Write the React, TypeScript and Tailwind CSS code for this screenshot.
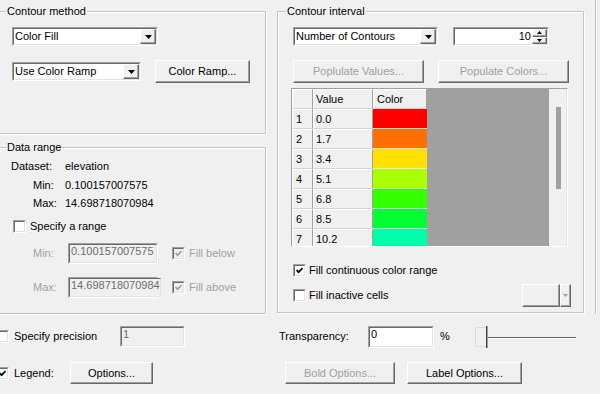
import React from "react";

const sunken = "border border-t-[#a0a0a0] border-l-[#a0a0a0] border-r-white border-b-white";
const sunkenInner = "border border-t-[#696969] border-l-[#696969] border-r-[#e3e3e3] border-b-[#e3e3e3]";
const raised =
  "border border-t-white border-l-white border-r-[#696969] border-b-[#696969] shadow-[inset_-1px_-1px_0_#a0a0a0]";

const Arrow = ({ color = "#000" }: { color?: string }) => (
  <svg width="7" height="4" viewBox="0 0 7 4">
    <polygon points="0,0 7,0 3.5,4" fill={color} />
  </svg>
);

const Combo = ({ text, className }: { text: string; className: string }) => (
  <div className={`flex ${sunken} ${className}`}>
    <div className={`flex min-w-0 flex-1 bg-white ${sunkenInner}`}>
      <span className="flex-1 overflow-hidden whitespace-nowrap pl-[1px] leading-[15px]">{text}</span>
      <div className={`flex w-[16px] items-center justify-center bg-[#f0f0f0] ${raised}`}>
        <Arrow />
      </div>
    </div>
  </div>
);

const Btn = ({ text, disabled, className }: { text: string; disabled?: boolean; className: string }) => (
  <button
    type="button"
    className={`flex items-center justify-center bg-[#f0f0f0] leading-[13px] ${raised} ${className} ${
      disabled ? "text-[#a0a0a0]" : "text-black"
    }`}
  >
    {text}
  </button>
);

const Edit = ({ text, disabled, className }: { text: string; disabled?: boolean; className: string }) => (
  <div className={`flex ${sunken} ${className}`}>
    <div
      className={`flex-1 pl-[1px] leading-[13px] ${sunkenInner} ${
        disabled ? "bg-[#f0f0f0] text-[#6d6d6d]" : "bg-white text-black"
      }`}
    >
      {text}
    </div>
  </div>
);

const Check = ({ checked, disabled, className = "" }: { checked?: boolean; disabled?: boolean; className?: string }) => (
  <div className={`flex h-[13px] w-[13px] shrink-0 ${sunken} ${className}`}>
    <div
      className={`flex flex-1 items-center justify-center ${sunkenInner} ${disabled ? "bg-[#f0f0f0]" : "bg-white"}`}
    >
      {checked && (
        <svg width="7" height="7" viewBox="0 0 7 7">
          <path d="M0.5 3 L2.6 5.2 L6.6 1" fill="none" stroke={disabled ? "#a0a0a0" : "#000"} strokeWidth="1.7" />
        </svg>
      )}
    </div>
  </div>
);

const rows = [
  { n: "1", v: "0.0", c: "#ff0000" },
  { n: "2", v: "1.7", c: "#ff7000" },
  { n: "3", v: "3.4", c: "#ffe000" },
  { n: "4", v: "5.1", c: "#aaff00" },
  { n: "5", v: "6.8", c: "#33ff00" },
  { n: "6", v: "8.5", c: "#00ff33" },
  { n: "7", v: "10.2", c: "#00ffaa" },
];

const cell = "border-r border-b border-r-[#a0a0a0] border-b-[#d4d4d4] border-t border-l border-t-white border-l-white";

const ContourTable = () => (
  <div className={`ml-[13px] mt-[5px] flex h-[159px] w-[277px] overflow-hidden ${sunken}`}>
    <div className="flex w-[135px] flex-col">
      <div className="flex h-[20px] shrink-0 leading-[18px]">
        <div className={`w-[21px] ${cell}`} />
        <div className={`w-[60px] pl-[2px] ${cell} border-r-[#696969]`}>Value</div>
        <div className={`w-[54px] pl-[3px] ${cell}`}>Color</div>
      </div>
      {rows.map((r) => (
        <div key={r.n} className="flex h-[20px] shrink-0 leading-[18px]">
          <div className={`w-[21px] pl-[3px] ${cell} border-r-[#696969]`}>{r.n}</div>
          <div className={`w-[60px] pl-[2px] ${cell}`}>{r.v}</div>
          <div className="w-[54px] border-b border-b-[#e6e6e6]" style={{ backgroundColor: r.c }} />
        </div>
      ))}
    </div>
    <div className="w-[122px] bg-[#a0a0a0]" />
    <div className="w-[18px] border-r border-r-[#e3e3e3] pl-[7px] pt-[18px]">
      <div className="h-[82px] w-[5px] bg-[#a0a0a0]" />
    </div>
  </div>
);

const Spin = () => (
  <div className={`ml-[15px] flex h-[19px] w-[96px] ${sunken}`}>
    <div className={`flex flex-1 bg-white ${sunkenInner}`}>
      <span className="flex-1 pr-[1px] text-right leading-[15px]">10</span>
      <div className="flex w-[15px] flex-col">
        <div className={`flex flex-1 items-center justify-center bg-[#f0f0f0] ${raised}`}>
          <svg width="5" height="3" viewBox="0 0 5 3">
            <polygon points="0,3 5,3 2.5,0" fill="#000" />
          </svg>
        </div>
        <div className={`flex flex-1 items-center justify-center bg-[#f0f0f0] ${raised}`}>
          <svg width="5" height="3" viewBox="0 0 5 3">
            <polygon points="0,0 5,0 2.5,3" fill="#000" />
          </svg>
        </div>
      </div>
    </div>
  </div>
);

const Slider = () => (
  <svg width="101" height="23" viewBox="0 0 101 23" className="shrink-0">
    <rect x="0.5" y="2.5" width="11" height="19" fill="none" stroke="#dcdcdc" />
    <line x1="12" y1="12.5" x2="101" y2="12.5" stroke="#646464" />
    <line x1="12" y1="13.5" x2="101" y2="13.5" stroke="#ffffff" />
    <line x1="11.5" y1="1" x2="11.5" y2="23" stroke="#404040" />
    <line x1="12.5" y1="1" x2="12.5" y2="23" stroke="#a0a0a0" />
  </svg>
);

const group = "border border-[#c4c4c4] shadow-[inset_1px_1px_0_#fff,1px_1px_0_#fff]";

export default function App() {
  return (
    <div className="relative h-[394px] w-[600px] overflow-hidden bg-[#f0f0f0] font-['Liberation_Sans',Arial,sans-serif] text-[11px] text-black">
      <div className="flex pt-[5px]">
        <div className="ml-[-2px] flex w-[268px] flex-col">
          <fieldset className={`h-[129px] ${group}`}>
            <legend className="ml-[7px] px-[1px] leading-[13px]">Contour method</legend>
            <div className="flex flex-col">
              <Combo text="Color Fill" className="ml-[13px] mt-[9px] h-[19px] w-[146px]" />
              <div className="mt-[14px] flex h-[23px] items-center">
                <Combo text="Use Color Ramp" className="ml-[13px] h-[19px] w-[129px]" />
                <Btn text="Color Ramp..." className="ml-[14px] h-[23px] w-[95px]" />
              </div>
            </div>
          </fieldset>
          <fieldset className={`mt-[7px] h-[173px] ${group}`}>
            <legend className="ml-[7px] px-[1px] leading-[13px]">Data range</legend>
            <div className="flex flex-col leading-[13px]">
              <div className="ml-[12px] mt-[6px] flex">
                <span className="w-[54px]">Dataset:</span>
                <span>elevation</span>
              </div>
              <div className="ml-[12px] mt-[6px] flex">
                <span className="w-[54px] pl-[22px]">Min:</span>
                <span>0.100157007575</span>
              </div>
              <div className="ml-[12px] mt-[5px] flex">
                <span className="w-[54px] pl-[22px]">Max:</span>
                <span>14.698718070984</span>
              </div>
              <div className="ml-[14px] mt-[10px] flex items-center">
                <Check />
                <span className="ml-[4px]">Specify a range</span>
              </div>
              <div className="mt-[10px] flex h-[21px] items-center">
                <span className="ml-[34px] w-[35px] text-[#a0a0a0]">Min:</span>
                <Edit text="0.100157007575" disabled className="h-[21px] w-[90px]" />
                <Check checked disabled className="ml-[14px]" />
                <span className="ml-[4px] text-[#a0a0a0]">Fill below</span>
              </div>
              <div className="mt-[13px] flex h-[21px] items-center">
                <span className="ml-[34px] w-[35px] text-[#a0a0a0]">Max:</span>
                <Edit text="14.698718070984" disabled className="h-[21px] w-[90px]" />
                <Check checked disabled className="ml-[14px]" />
                <span className="ml-[4px] text-[#a0a0a0]">Fill above</span>
              </div>
            </div>
          </fieldset>
        </div>

        <fieldset className={`ml-[11px] h-[308px] w-[307px] ${group}`}>
          <legend className="ml-[8px] px-[1px] leading-[13px]">Contour interval</legend>
          <div className="flex flex-col">
            <div className="mt-[9px] flex">
              <Combo text="Number of Contours" className="ml-[15px] h-[19px] w-[145px]" />
              <Spin />
            </div>
            <div className="mt-[14px] flex">
              <Btn text="Poplulate Values..." disabled className="ml-[15px] h-[23px] w-[131px]" />
              <Btn text="Populate Colors..." disabled className="ml-[14px] h-[23px] w-[131px]" />
            </div>
            <ContourTable />
            <div className="ml-[15px] mt-[17px] flex items-center leading-[13px]">
              <Check checked />
              <span className="ml-[3px]">Fill continuous color range</span>
            </div>
            <div className="mt-[7px] flex h-[23px] items-center leading-[13px]">
              <Check className="ml-[15px]" />
              <span className="ml-[3px]">Fill inactive cells</span>
              <div className="ml-auto mr-[12px] flex h-[23px]">
                <div className={`w-[38px] bg-[#f0f0f0] ${raised}`} />
                <div className={`flex w-[11px] items-center justify-center bg-[#f0f0f0] ${raised}`}>
                  <svg width="5" height="3" viewBox="0 0 5 3">
                    <polygon points="0,0 5,0 2.5,3" fill="#a0a0a0" />
                  </svg>
                </div>
              </div>
            </div>
          </div>
        </fieldset>
        <div className="ml-[11px] mt-[-5px] flex h-[314px]">
          <div className="w-px bg-[#c4c4c4]" />
          <div className="w-px bg-white" />
        </div>
      </div>

      <div className="mt-[11px] flex h-[23px] items-center leading-[13px]">
        <div className="flex w-[277px] items-center">
          <Check className="ml-[-4px]" />
          <span className="ml-[5px] w-[106px]">Specify precision</span>
          <Edit text="1" disabled className="h-[21px] w-[65px]" />
        </div>
        <span className="ml-[2px] w-[89px]">Transparency:</span>
        <Edit text="0" className="h-[22px] w-[66px]" />
        <span className="w-[41px] pl-[6px]">%</span>
        <Slider />
      </div>

      <div className="mt-[14px] flex h-[22px] items-center leading-[13px]">
        <div className="flex w-[277px] items-center">
          <Check checked className="ml-[-4px]" />
          <span className="ml-[5px] w-[56px]">Legend:</span>
          <Btn text="Options..." className="h-[22px] w-[83px]" />
        </div>
        <Btn text="Bold Options..." disabled className="ml-[8px] h-[22px] w-[110px]" />
        <Btn text="Label Options..." className="ml-[12px] h-[22px] w-[115px]" />
      </div>
    </div>
  );
}
